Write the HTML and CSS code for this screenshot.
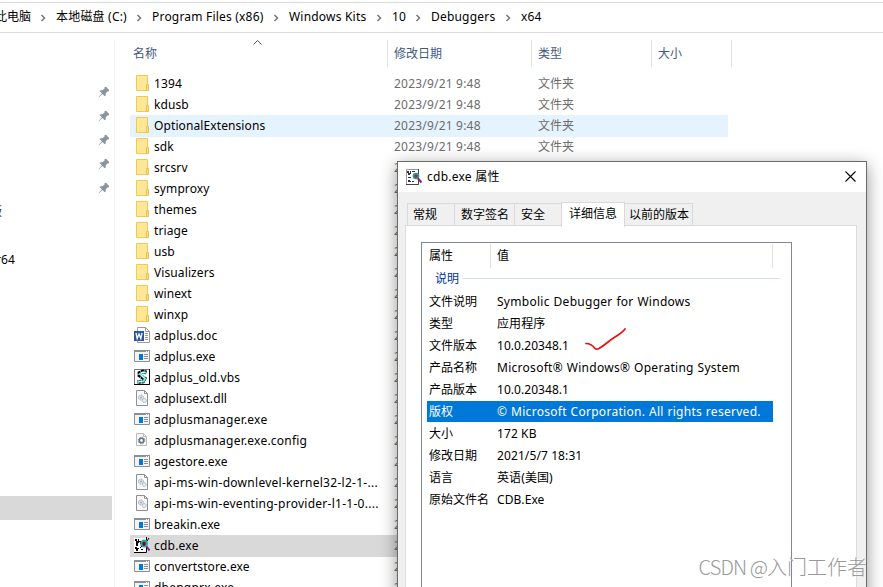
FILE: index.html
```html
<!DOCTYPE html>
<html lang="zh-CN">
<head>
    <meta charset="UTF-8">
    <title>x64</title>
    <link rel="stylesheet" href="styles.css">
</head>
<body>
    <svg class="sprite" xmlns="http://www.w3.org/2000/svg">
        <symbol id="folder" viewBox="0 0 16 16">
            <path d="M2.5 .5h11v15h-11z" fill="#ffe797" stroke="#efcb52"/>
            <path d="M12.5 9.5h2v6h-2z" fill="#ffe17e" stroke="#e8c14a"/>
        </symbol>
        <symbol id="exe" viewBox="0 0 16 16">
            <path d="M.5 2.5h15v11H.5z" fill="#f4f4f4" stroke="#8b9095"/>
            <path d="M0 2h16v2H0z" fill="#8b9095"/>
            <path d="M12 3h1v1h-1zM14 3h1v1h-1z" fill="#fff"/>
            <path d="M5 6h4v6H5z" fill="#0078d7"/>
            <path d="M10 6.5h4M10 8.5h4M10 10.5h4" stroke="#8b9095"/>
        </symbol>
        <symbol id="doc" viewBox="0 0 16 16">
            <path d="M3.5 .5h8l4 4v11h-12z" fill="#fff" stroke="#999"/>
            <path d="M11.5 .5v4h4" fill="none" stroke="#999"/>
            <path d="M11 6.5h3M11 8.5h3M11 10.5h3M11 12.5h3" stroke="#999"/>
            <path d="M0 4h10v10H0z" fill="#2b579a"/>
            <path d="M2 6l1.200 5.500L5 7l1.800 4.500L8 6" fill="none" stroke="#fff" stroke-width="1.300"/>
        </symbol>
        <symbol id="vbs" viewBox="0 0 16 16">
            <path d="M.5 .5h15v15H.5z" fill="#fff" stroke="#777"/>
            <path d="M15.500 0v15.500H0" fill="none" stroke="#000"/>
            <path d="M12.500 3.500L9 2.500 5.500 4v2.500l5 3-1.500 3-5.500 .5" fill="none" stroke="#000" stroke-width="3.800" stroke-dasharray="2.500 .5"/>
            <path d="M12 3.500H8.500L6 5l5 4.500-1.500 3h-6" fill="none" stroke="#6ee" stroke-width="2"/>
            <path d="M7 3.500h4M7 6l3.500 3.500M5 12.500h3" stroke="#fff" stroke-width=".8"/>
        </symbol>
        <symbol id="dll" viewBox="0 0 16 16">
            <path d="M2.5 .5h8l3 3v12h-11z" fill="#fafafa" stroke="#8f8f8f"/>
            <path d="M10.500 .5v3h3" fill="none" stroke="#8f8f8f"/>
            <circle cx="7" cy="7.500" r="2.500" fill="#e2e5e8" stroke="#9ba2a8" stroke-dasharray="1.200 .7"/>
            <circle cx="7" cy="7.500" r=".9" fill="#9ba2a8"/>
            <circle cx="10.300" cy="10.500" r="2" fill="#dcebf5" stroke="#8eabc0" stroke-dasharray="1 .6"/>
        </symbol>
        <symbol id="config" viewBox="0 0 16 16">
            <path d="M2.500 1.500h7l3 3v9h-10z" fill="#fafafa" stroke="#bcbcbc"/>
            <path d="M9.500 1.500v3h3" fill="none" stroke="#bcbcbc"/>
            <circle cx="7.500" cy="8.500" r="2.200" fill="none" stroke="#69767e" stroke-width="1.600"/>
            <circle cx="7.500" cy="8.500" r="3.300" fill="none" stroke="#69767e" stroke-dasharray="1.300 1.290"/>
        </symbol>
        <symbol id="cdb" viewBox="0 0 16 16">
            <path d="M0 1h13v15H0z" fill="#fff"/>
            <path d="M12.500 0v15.500H0" fill="none" stroke="#000"/>
            <path d="M1 2h2v2h1V2h1v4H2V4H1zM2 6h2v3H2zM1 10h2v1h2v1H4v2H2v-2H1zM5 4h2v1H5zM7 12h2v1H7z" fill="#000"/>
            <circle cx="10" cy="6.500" r="3" fill="#e01010" stroke="#18b0b8" stroke-width="1.800"/>
            <path d="M7 6h-1M8 9L6 11M13 4l2-3M10 5v4" stroke="#000"/>
            <path d="M12.500 9.500l3 4" stroke="#8b1a8b" stroke-width="2"/>
        </symbol>
        <symbol id="cdb-page" viewBox="0 0 16 16">
            <path d="M.5 .5h12v15H.5z" fill="#fff" stroke="#999"/>
            <path d="M12.500 0v15.500H0" fill="none" stroke="#444"/>
            <path d="M1 2h2v2h1V2h1v3H4v1H2V4H1zM6 2h3v1H6zM2 8h3v1H2zM2 11h2v1h1v1H2zM6 12h2v1H6z" fill="#333"/>
            <circle cx="10" cy="7" r="2.400" fill="#c01818" stroke="#259a9f" stroke-width="1.800"/>
            <path d="M12 9.500l3.500 4" stroke="#8b1a8b" stroke-width="2"/>
        </symbol>
        <symbol id="pin" viewBox="0 0 12 12">
            <path d="M6.500 1L8 .8 11.200 4l-.3 1.300-1.300.1-1.800 1.800-.1 2.300-1 .8-2.300-2.300L1 11.300l-.4-.4L3.900 7.300 1.700 5.200l.8-1 2.400-.1 1.800-1.800z" fill="#8996a0"/>
        </symbol>
        <symbol id="chevron" viewBox="0 0 6 8">
            <path d="M1.500 1l3 3-3 3" fill="none" stroke="#777" stroke-width="1.500"/>
        </symbol>
    </svg>

    <div class="explorer">
        <nav class="breadcrumb">
            <span class="crumb c-pc">此电脑</span><svg class="chev"><use href="#chevron"/></svg>
            <span class="crumb c-disk">本地磁盘 (C:)</span><svg class="chev"><use href="#chevron"/></svg>
            <span class="crumb c-prog">Program Files (x86)</span><svg class="chev"><use href="#chevron"/></svg>
            <span class="crumb c-kits">Windows Kits</span><svg class="chev"><use href="#chevron"/></svg>
            <span class="crumb c-ten">10</span><svg class="chev"><use href="#chevron"/></svg>
            <span class="crumb c-dbg">Debuggers</span><svg class="chev"><use href="#chevron"/></svg>
            <span class="crumb">x64</span>
        </nav>

        <div class="content">
            <aside class="sidebar">
                <div class="nav-row pinned"><svg class="pin"><use href="#pin"/></svg></div>
                <div class="nav-row pinned"><svg class="pin"><use href="#pin"/></svg></div>
                <div class="nav-row pinned"><svg class="pin"><use href="#pin"/></svg></div>
                <div class="nav-row pinned"><svg class="pin"><use href="#pin"/></svg></div>
                <div class="nav-row pinned"><svg class="pin"><use href="#pin"/></svg></div>
                <div class="nav-row"><span class="cut cut-a">版</span></div>
                <div class="nav-row"></div>
                <div class="nav-row"><span class="cut cut-b">r64</span></div>
                <div class="nav-gap"></div>
                <div class="nav-row current"></div>
            </aside>

            <main class="files">
                <div class="columns">
                    <div class="col name">名称<svg class="sort" viewBox="0 0 9 5"><path d="M.5 4.500l4-4 4 4" fill="none" stroke="#555"/></svg></div>
                    <div class="col date">修改日期</div>
                    <div class="col type">类型</div>
                    <div class="col size">大小</div>
                </div>
                <div class="row"><svg class="icon"><use href="#folder"/></svg><span class="file">1394</span><span class="when">2023/9/21 9:48</span><span class="kind">文件夹</span></div>
                <div class="row"><svg class="icon"><use href="#folder"/></svg><span class="file">kdusb</span><span class="when">2023/9/21 9:48</span><span class="kind">文件夹</span></div>
                <div class="row hover"><svg class="icon"><use href="#folder"/></svg><span class="file">OptionalExtensions</span><span class="when">2023/9/21 9:48</span><span class="kind">文件夹</span></div>
                <div class="row"><svg class="icon"><use href="#folder"/></svg><span class="file">sdk</span><span class="when">2023/9/21 9:48</span><span class="kind">文件夹</span></div>
                <div class="row"><svg class="icon"><use href="#folder"/></svg><span class="file">srcsrv</span><span class="when">2</span></div>
                <div class="row"><svg class="icon"><use href="#folder"/></svg><span class="file">symproxy</span><span class="when">2</span></div>
                <div class="row"><svg class="icon"><use href="#folder"/></svg><span class="file">themes</span><span class="when">2</span></div>
                <div class="row"><svg class="icon"><use href="#folder"/></svg><span class="file">triage</span><span class="when">2</span></div>
                <div class="row"><svg class="icon"><use href="#folder"/></svg><span class="file">usb</span><span class="when">2</span></div>
                <div class="row"><svg class="icon"><use href="#folder"/></svg><span class="file">Visualizers</span><span class="when">2</span></div>
                <div class="row"><svg class="icon"><use href="#folder"/></svg><span class="file">winext</span><span class="when">2</span></div>
                <div class="row"><svg class="icon"><use href="#folder"/></svg><span class="file">winxp</span><span class="when">2</span></div>
                <div class="row"><svg class="icon"><use href="#doc"/></svg><span class="file wide">adplus.doc</span><span class="when">2</span></div>
                <div class="row"><svg class="icon"><use href="#exe"/></svg><span class="file">adplus.exe</span><span class="when">2</span></div>
                <div class="row"><svg class="icon"><use href="#vbs"/></svg><span class="file wide">adplus_old.vbs</span><span class="when">2</span></div>
                <div class="row"><svg class="icon"><use href="#dll"/></svg><span class="file">adplusext.dll</span><span class="when">2</span></div>
                <div class="row"><svg class="icon"><use href="#exe"/></svg><span class="file wide">adplusmanager.exe</span><span class="when">2</span></div>
                <div class="row"><svg class="icon"><use href="#config"/></svg><span class="file wide">adplusmanager.exe.config</span><span class="when">2</span></div>
                <div class="row"><svg class="icon"><use href="#exe"/></svg><span class="file">agestore.exe</span><span class="when">2</span></div>
                <div class="row"><svg class="icon"><use href="#dll"/></svg><span class="file long">api-ms-win-downlevel-kernel32-l2-1-...</span><span class="when">2</span></div>
                <div class="row"><svg class="icon"><use href="#dll"/></svg><span class="file long">api-ms-win-eventing-provider-l1-1-0....</span><span class="when">2</span></div>
                <div class="row"><svg class="icon"><use href="#exe"/></svg><span class="file">breakin.exe</span><span class="when">2</span></div>
                <div class="row selected"><svg class="icon"><use href="#cdb"/></svg><span class="file wide">cdb.exe</span><span class="when">2</span></div>
                <div class="row"><svg class="icon"><use href="#exe"/></svg><span class="file">convertstore.exe</span><span class="when">2</span></div>
                <div class="row"><svg class="icon"><use href="#exe"/></svg><span class="file wide">dbengprx.exe</span><span class="when">2</span></div>
            </main>
        </div>
    </div>

    <section class="dialog">
        <header class="titlebar">
            <svg class="icon"><use href="#cdb-page"/></svg>
            <span class="title">cdb.exe 属性</span>
            <svg class="close" viewBox="0 0 11 11"><path d="M.5 .5l10 10M10.500 .5l-10 10" stroke="#000" stroke-width="1.100"/></svg>
        </header>
        <div class="tabs">
            <div class="tab t1">常规</div>
            <div class="tab t2">数字签名</div>
            <div class="tab t3">安全</div>
            <div class="tab t4 active">详细信息</div>
            <div class="tab t5">以前的版本</div>
        </div>
        <div class="panel">
            <div class="details">
                <div class="head"><span class="key">属性</span><span class="val">值</span></div>
                <div class="group"><span>说明</span></div>
                <div class="prop"><span class="key">文件说明</span><span class="val text">Symbolic Debugger for Windows</span></div>
                <div class="prop"><span class="key">类型</span><span class="val">应用程序</span></div>
                <div class="prop"><span class="key">文件版本</span><span class="val number">10.0.20348.1</span><svg class="tick" viewBox="0 0 43 24"><path d="M2 15.500c3 0 6 1 9 5 1 1 2 1 4 0 7-4 10-8 16-11.500 5-3 8-5 10-8" fill="none" stroke="#f00c0c" stroke-width="1.700" stroke-linecap="round"/></svg></div>
                <div class="prop"><span class="key">产品名称</span><span class="val text">Microsoft® Windows® Operating System</span></div>
                <div class="prop"><span class="key">产品版本</span><span class="val number">10.0.20348.1</span></div>
                <div class="prop active"><span class="key">版权</span><span class="val text">© Microsoft Corporation. All rights reserved.</span></div>
                <div class="prop"><span class="key">大小</span><span class="val">172 KB</span></div>
                <div class="prop"><span class="key">修改日期</span><span class="val">2021/5/7 18:31</span></div>
                <div class="prop"><span class="key">语言</span><span class="val">英语(美国)</span></div>
                <div class="prop"><span class="key">原始文件名</span><span class="val">CDB.Exe</span></div>
            </div>
        </div>
    </section>

    <div class="watermark"><span class="site">CSDN @</span>入门工作者</div>
</body>
</html>
```
FILE: styles.css
```css
* {
    box-sizing: border-box;
}

html {
    height: 587px;
    overflow: hidden;
}

body {
    margin: 0;
    width: 883px;
    height: 587px;
    position: relative;
    overflow: hidden;
    background-color: #fff;
    color: #000;
    font-family: "Noto Sans", "Noto Sans CJK SC", sans-serif;
    font-size: 12px;
    letter-spacing: 0.1px;
    line-height: 20px;
    white-space: nowrap;
}

.sprite {
    position: absolute;
    width: 0;
    height: 0;
}

/* explorer window */
.explorer {
    height: 587px;
    padding-top: 2px;
    overflow: hidden;
}

.breadcrumb {
    display: flex;
    align-items: center;
    height: 31px;
    border-top: 1px solid #d9d9d9;
    border-bottom: 1px solid #d9d9d9;
    padding-bottom: 2px;
    letter-spacing: 0.2px;
}

.crumb {
    flex: none;
}

.chev {
    flex: none;
    width: 6px;
    height: 8px;
    margin: 2px 10px 0 9px;
}

.c-pc {
    width: 36px;
    margin-left: -5px;
    letter-spacing: 0;
}

.c-disk {
    width: 71px;
}

.c-prog {
    width: 112px;
}

.c-kits {
    width: 78px;
}

.c-ten {
    width: 14px;
}

.c-dbg {
    width: 65px;
}

.content {
    display: flex;
}

.sidebar {
    width: 115px;
    height: 547px;
    margin-top: 7px;
    padding-top: 40px;
    border-right: 1px solid #f3f3f3;
}

.nav-row {
    width: 112px;
    height: 24px;
    overflow: hidden;
}

.pinned {
    display: flex;
    justify-content: flex-end;
    padding: 6px 2px 0 0;
}

.pin {
    width: 12px;
    height: 12px;
}

.cut {
    display: block;
    line-height: 24px;
}

.cut-a {
    margin-left: -10px;
    color: #223;
}

.cut-b {
    margin-left: -4px;
}

.nav-gap {
    height: 224px;
}

.current {
    background-color: #d9d9d9;
}

.files {
    width: 617px;
    padding: 7px 0 0 15px;
}

.columns {
    display: flex;
    height: 27px;
    margin-bottom: 6px;
    color: #44597c;
    letter-spacing: 0;
}

.col {
    position: relative;
    padding: 4px 0 0 6px;
    border-right: 1px solid #e3e3e3;
}

.col.name {
    width: 258px;
    padding-left: 3px;
}

.col.date {
    width: 144px;
}

.col.type {
    width: 120px;
}

.col.size {
    width: 80px;
}

.sort {
    position: absolute;
    left: 123px;
    top: 0;
    width: 9px;
    height: 5px;
}

.row {
    display: flex;
    align-items: center;
    width: 598px;
    height: 22px;
    margin-bottom: -1px;
    padding-left: 4px;
}

.row.hover {
    background-color: #e5f3ff;
}

.row.selected {
    background-color: #d9d9d9;
}

.icon {
    flex: none;
    width: 16px;
    height: 16px;
    margin-top: -2px;
}

.file {
    width: 240px;
    margin-left: 4px;
}

.file.wide {
    letter-spacing: 0.22px;
}

.file.long {
    letter-spacing: 0.27px;
}

.when {
    width: 144px;
    color: #6d6d6d;
    letter-spacing: 0.2px;
}

.kind {
    color: #6d6d6d;
    letter-spacing: 0;
}

/* properties dialog */
.dialog {
    position: absolute;
    left: 397px;
    top: 161px;
    width: 470px;
    height: 500px;
    border: 1px solid #6b6b6b;
    background-color: #f0f0f0;
    box-shadow: 0 4px 16px rgba(0, 0, 0, 0.42);
}

.titlebar {
    display: flex;
    align-items: center;
    height: 30px;
    padding: 0 10px 0 8px;
    background-color: #fff;
}

.titlebar .icon {
    margin-top: 0;
}

.title {
    flex: 1;
    margin-left: 5px;
    letter-spacing: 0.25px;
}

.close {
    width: 11px;
    height: 11px;
    margin-top: -1px;
}

.tabs {
    display: flex;
    align-items: flex-end;
    height: 34px;
    padding-left: 9px;
    letter-spacing: 0;
}

.tab {
    height: 23px;
    margin-right: -1px;
    padding-left: 6px;
    border: 1px solid #d9d9d9;
    line-height: 22px;
}

.t1 {
    width: 48px;
    padding-left: 5px;
}

.t2 {
    width: 61px;
}

.t3 {
    width: 48px;
}

.t4 {
    width: 64px;
    padding-left: 7px;
}

.t5 {
    width: 69px;
    padding-left: 4px;
}

.tab.active {
    position: relative;
    height: 25px;
    margin-bottom: -1px;
    border-bottom: none;
    background-color: #fff;
}

.panel {
    width: 452px;
    height: 440px;
    margin: -1px 0 0 7px;
    padding: 16px 0 0 15px;
    border: 1px solid #dcdcdc;
    background-color: #fff;
}

.details {
    width: 371px;
    height: 420px;
    padding: 1px 0 0 5px;
    border: 1px solid #828790;
}

.head {
    display: flex;
    width: 346px;
    height: 24px;
    border-right: 1px solid #e0e0e0;
    line-height: 23px;
}

.key {
    flex: none;
    width: 70px;
    padding-left: 2px;
    letter-spacing: 0;
}

.head .key {
    width: 64px;
    border-right: 1px solid #e0e0e0;
}

.head .val {
    margin-left: 6px;
}

.group {
    display: flex;
    align-items: center;
    height: 22px;
    width: 353px;
    padding-left: 8px;
    color: #003399;
    letter-spacing: 0;
}

.group::after {
    content: "";
    flex: 1;
    height: 1px;
    margin: 0 0 2px 4px;
    background-color: #d5dff0;
}

.prop {
    position: relative;
    display: flex;
    width: 346px;
    height: 21px;
    margin: 1px 0;
    line-height: 21px;
}

.prop + .prop {
    margin-top: 0;
}

.prop.active {
    background-color: #0078d7;
    color: #fff;
}

.val.text {
    letter-spacing: 0.28px;
    word-spacing: 0.4px;
}

.val.number {
    letter-spacing: 0.05px;
}

.tick {
    position: absolute;
    left: 157px;
    top: -7px;
    width: 43px;
    height: 24px;
}

.watermark {
    position: absolute;
    right: 16px;
    bottom: 6px;
    color: #999;
    font-family: "Noto Sans CJK SC", sans-serif;
    font-size: 20px;
    font-weight: 300;
    letter-spacing: 0;
    line-height: 28px;
    text-shadow: -1px -1px 0 rgba(255, 255, 255, 0.6);
}

.site {
    letter-spacing: -0.9px;
}
```
